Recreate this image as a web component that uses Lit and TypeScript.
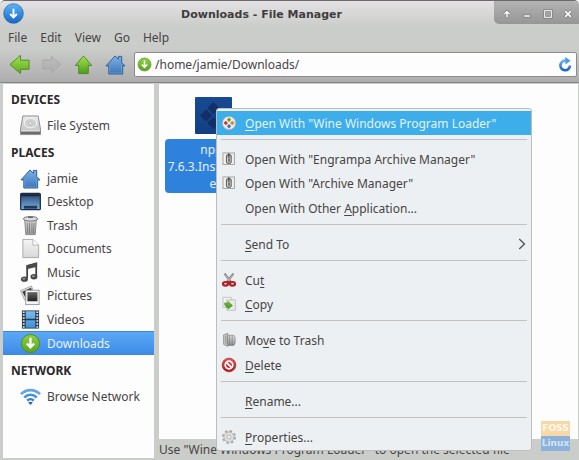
import { LitElement, html, css, svg, nothing, TemplateResult } from "lit";
import { customElement, property } from "lit/decorators.js";
import { classMap } from "lit/directives/class-map.js";

const house = svg`
  <path d="M1 12.500 10.500 2 14 5.500V2.500h3.500v6.500l3.500 3.500H18.500V21H4V12.500z" fill="url(#g)" stroke="#2c5c96" stroke-linejoin="round"/>
  <path d="M5 12v8h12.500v-8" fill="none" stroke="#8fb9e6" opacity=".5"/>`;

const downDisc = svg`
  <circle cx="11" cy="11" r="9.500" fill="url(#g)" stroke="#4f8f1c"/>
  <path d="M11 5v9M7.200 11 11 15l3.800-4" fill="none" stroke="#fff" stroke-width="2.400"/>`;

const archive = svg`
  <rect x="1.500" y="1.500" width="18" height="18" fill="#f1f1f0" stroke="#a0a0a0" stroke-width="1.500"/>
  <rect x="7" y="4" width="7.500" height="14" rx="3.500" fill="#cfcfcf" stroke="#666" stroke-width="1.700"/>
  <path d="M10.700 1.500V9M9 5h4M9 8h4" stroke="#555" stroke-width="1.500"/>
  <rect x="9.500" y="10" width="3" height="5.500" fill="#777"/>`;

interface Glyph { from?: string; to?: string; art: TemplateResult; }

const glyphs: Record<string, Glyph> = {
  app: { from: "#5bb4f6", to: "#1667c6", art: svg`
    <circle cx="11" cy="11" r="10.300" fill="url(#g)" stroke="#2460a0" stroke-width=".7"/>
    <path d="M11 6v9M7.500 11.500 11 15l3.500-3.500" fill="none" stroke="#fff" stroke-width="2"/>` },
  back: { from: "#a4e351", to: "#5aaa1e", art: svg`
    <path d="M1 11 12 1.500V6.500h9v9.500h-9v4.500z" fill="url(#g)" stroke="#4c8a22" stroke-linejoin="round"/>` },
  forward: { from: "#bebebe", to: "#adadad", art: svg`
    <path d="M20.500 11 11 2.500v4H2v9h9v4z" fill="url(#g)" stroke="#a6a6a6" stroke-linejoin="round"/>` },
  up: { from: "#a4e351", to: "#4c9c1a", art: svg`
    <path d="M11 2 19.500 12H16v8.500H6V12H2.500z" fill="url(#g)" stroke="#4c8a22" stroke-linejoin="round"/>` },
  home: { from: "#7fb2e6", to: "#3b75b8", art: house },
  downloads: { from: "#8fd044", to: "#5ba51f", art: downDisc },
  reload: { from: "#69b3f2", to: "#1d66c2", art: svg`
    <path d="M17.500 12.500A7 7 0 1 1 11.500 5.500" fill="none" stroke="url(#g)" stroke-width="4"/>
    <path d="M10.500 0 18.500 5.500 11 11z" fill="#4a9be6"/>` },
  disk: { from: "#ececec", to: "#b9b9b9", art: svg`
    <path d="M3 1h16l2.500 14V20.500H.5V15z" fill="url(#g)" stroke="#8a8a8a"/>
    <ellipse cx="11" cy="8.500" rx="6.500" ry="5" fill="#d0d0d0" stroke="#f7f7f7"/>
    <circle cx="11" cy="8.500" r="1.500" fill="#f6f6f6" stroke="#a2a2a2" stroke-width=".6"/>
    <path d="M1 17.500h20v2.500H1z" fill="#6c6c6c"/><path d="M2 16h18" stroke="#e2e2e2"/>` },
  desktop: { from: "#28446c", to: "#79b2ea", art: svg`
    <rect x=".7" y="2.500" width="20.600" height="17" rx="1" fill="url(#g)" stroke="#1c2c42" stroke-width="1.300"/>
    <path d="M1.500 4.500h19" stroke="#1a2737" stroke-width="2"/>
    <rect x="4" y="15.500" width="14" height="3" fill="#203957"/>` },
  trash: { from: "#dcdcdc", to: "#9a9a9a", art: svg`
    <path d="M5 5.500 6 20.500h10l1-15z" fill="url(#g)" stroke="#858585"/>
    <path d="M7.500 8l.7 11M10 8v11M12.500 8v11M14.800 8l-.7 11" stroke="#808080"/>
    <ellipse cx="11" cy="4" rx="7.500" ry="2.400" fill="#dcdcdc" stroke="#6c6c6c"/>
    <path d="M8.500 2.500h5" stroke="#666" stroke-width="1.500"/>` },
  page: { from: "#f5f5f5", to: "#d8d8d8", art: svg`
    <path d="M3 1.500h10.500L19.500 7.500v13H3z" fill="url(#g)" stroke="#a9a9a9"/>
    <path d="M13.500 1.500v6h6" fill="#fff" stroke="#b5b5b5"/>` },
  music: { art: svg`
    <path d="M7.500 17V4L17 1.500V15" fill="none" stroke="#3d3d3d" stroke-width="1.800"/>
    <path d="M7 3.500 18 1v4L7 7.500z" fill="#4a4a4a"/>
    <ellipse cx="4.600" cy="18" rx="3.600" ry="2.800" fill="#474747"/><ellipse cx="14.600" cy="15.500" rx="3.600" ry="2.800" fill="#474747"/>
    <ellipse cx="4" cy="17.500" rx="1.500" ry="1" fill="#999"/><ellipse cx="14" cy="15" rx="1.500" ry="1" fill="#999"/>` },
  pictures: { from: "#666", to: "#222", art: svg`
    <path d="M.5 6 12 1 16 11 5 16z" fill="#dedede" stroke="#8d8d8d" stroke-width=".7"/>
    <path d="M2.500 7 11.500 3 14 10 6 14z" fill="#3a3a3a"/>
    <rect x="6" y="5.500" width="14" height="15" fill="#f5f5f5" stroke="#999"/>
    <rect x="7.800" y="7.500" width="10.500" height="9.500" fill="url(#g)"/>` },
  videos: { from: "#78bdf2", to: "#3f8fd8", art: svg`
    <rect x="2" y="1.500" width="18" height="19" fill="#2c3a47"/>
    <path d="M6 2.300h10v8H6zM6 11.700h10v8H6z" fill="url(#g)"/>
    <path d="M3.900 2.500v18M18.100 2.500v18" stroke="#e9eef2" stroke-width="1.900" stroke-dasharray="1.600 1.500"/>` },
  wifi: { art: svg`
    <path d="M1 8.500C7 3 15 3 21 8.500" fill="none" stroke="#5fa7e6" stroke-width="2.800"/>
    <path d="M4.500 12C8.500 8.300 13.500 8.300 17.500 12" fill="none" stroke="#4690d8" stroke-width="2.700"/>
    <path d="M7.500 15.300c2-2 5-2 7 0" fill="none" stroke="#377dc9" stroke-width="2.500"/>
    <path d="M8.500 17.300c1.400-1.200 3.600-1.200 5 0L11 20z" fill="#2668b8"/>` },
  wine: { art: svg`
    <circle cx="11" cy="11" r="10.300" fill="#f0ece6" stroke="#c0b0a4"/>
    <path d="M11 2.500 14.300 6 11 9.500 7.700 6z" fill="#4ba52e"/><path d="M16 7.500 19.500 11 16 14.500 12.700 11z" fill="#d9842e"/>
    <path d="M6 7.500 9.300 11 6 14.500 2.500 11z" fill="#c23b36"/><path d="M11 12.500 14.300 16 11 19.500 7.700 16z" fill="#3b70b6"/>` },
  archive: { art: archive },
  cut: { art: svg`
    <path d="M4 1 14 14M18 1 8 14" stroke="#777" stroke-width="3.400"/>
    <path d="M4.500 2 13 13M17.500 2 9 13" stroke="#d8d8d8" stroke-width="1.200"/>
    <ellipse cx="5.500" cy="17" rx="4" ry="2.800" fill="none" stroke="#b51f25" stroke-width="3.400"/>
    <ellipse cx="16.500" cy="17" rx="4" ry="2.800" fill="none" stroke="#b51f25" stroke-width="3.400"/>
    <path d="M8 14h6" stroke="#b51f25" stroke-width="3"/>` },
  copy: { from: "#7cc742", to: "#3c8c1a", art: svg`
    <path d="M1.500 .500h13v16h-13z" fill="#f3f3f3" stroke="#a9a9a9"/>
    <path d="M7.500 4.500h13.500v16.500h-13.500z" fill="#e9e9e9" stroke="#a9a9a9"/>
    <path d="M4 9.500h5.500V7l7 6.500-7 5.500V16.500C6.500 16.500 4 14 4 9.500z" fill="url(#g)" stroke="#4a9426"/>` },
  bin: { from: "#e4e4e4", to: "#8a8a8a", art: svg`
    <path d="M2.500 3 9 .5v20.500L2.500 18z" fill="#c4c4c4" stroke="#777"/>
    <path d="M9 3.500h9.500c3 2 3 14 0 16H9z" fill="url(#g)" stroke="#777"/>
    <path d="M12 4v15M16 4v15M6 5v12" stroke="#858585" stroke-width="1.200"/>` },
  forbid: { from: "#e8534f", to: "#b0161a", art: svg`
    <circle cx="11" cy="11" r="10.800" fill="url(#g)" stroke="#94191c"/>
    <circle cx="11" cy="11" r="6" fill="none" stroke="#fff" stroke-width="2.600"/>
    <path d="M6.800 6.800 15.200 15.200" stroke="#fff" stroke-width="2.800"/>` },
  gear: { art: svg`
    <circle cx="11" cy="11" r="9.500" fill="none" stroke="#a6a6a6" stroke-width="3" stroke-dasharray="3.730 3.730"/>
    <circle cx="11" cy="11" r="8" fill="#dedede" stroke="#a0a0a0"/>
    <circle cx="11" cy="11" r="3" fill="#f3f3f3" stroke="#999"/>` },
  exe: { from: "#174a93", to: "#123f83", art: svg`
    <rect width="22" height="22" rx=".6" fill="url(#g)"/>
    <path d="M11 3 14.600 6.600 11 10.200 7.400 6.600zM6.600 7.400 10.200 11 6.600 14.600 3 11zM15.400 7.400 19 11 15.400 14.600 11.800 11zM11 11.800 14.600 15.400 11 19 7.400 15.400z" fill="#122f66"/>` },
  shade: { art: svg`<path d="M11 21V5M3.500 11 11 3.500 18.500 11" fill="none" stroke="#777" stroke-width="7"/><path d="M11 20V5M4 11 11 4l7 7" fill="none" stroke="#fff" stroke-width="4"/>` },
  minimize: { art: svg`<path d="M1 16.500h20" stroke="#777" stroke-width="8"/><path d="M3 16.500h16" stroke="#fff" stroke-width="4"/>` },
  maximize: { art: svg`<rect x="2" y="2" width="18" height="18" fill="none" stroke="#777" stroke-width="7"/><rect x="2" y="2" width="18" height="18" fill="none" stroke="#fff" stroke-width="3"/>` },
  close: { art: svg`<path d="M2 2 20 20M20 2 2 20" stroke="#777" stroke-width="8"/><path d="M3 3 19 19M19 3 3 19" stroke="#fff" stroke-width="4.600"/>` },
  chevron: { art: svg`<path d="M6 2 15.500 11 6 20" fill="none" stroke="#55504f" stroke-width="2.400"/>` },
};

@customElement("fm-icon")
class FmIcon extends LitElement {
  static styles = css`
    :host { display: block; flex: none; width: 22px; height: 22px; }
    .art { display: block; width: 100%; height: 100%; overflow: visible; }
  `;
  @property() name = "";

  render() {
    const glyph = glyphs[this.name];
    if (!glyph) return nothing;
    return html`<svg class="art" viewBox="0 0 22 22" aria-hidden="true">
      <defs><linearGradient id="g" x1="0" y1="0" x2="0" y2="1">
        <stop offset="0" stop-color=${glyph.from ?? "#fff"}></stop>
        <stop offset="1" stop-color=${glyph.to ?? "#fff"}></stop>
      </linearGradient></defs>
      ${glyph.art}
    </svg>`;
  }
}

interface Place { icon: string; label: string; selected?: boolean; }
interface Action { label: string; key: string; icon?: string; active?: boolean; submenu?: boolean; }

const sections: { title: string; places: Place[] }[] = [
  { title: "DEVICES", places: [{ icon: "disk", label: "File System" }] },
  { title: "PLACES", places: [
    { icon: "home", label: "jamie" },
    { icon: "desktop", label: "Desktop" },
    { icon: "trash", label: "Trash" },
    { icon: "page", label: "Documents" },
    { icon: "music", label: "Music" },
    { icon: "pictures", label: "Pictures" },
    { icon: "videos", label: "Videos" },
    { icon: "downloads", label: "Downloads", selected: true },
  ] },
  { title: "NETWORK", places: [{ icon: "wifi", label: "Browse Network" }] },
];

const actionGroups: Action[][] = [
  [{ label: 'Open With "Wine Windows Program Loader"', key: "O", icon: "wine", active: true }],
  [
    { label: 'Open With "Engrampa Archive Manager"', key: "", icon: "archive" },
    { label: 'Open With "Archive Manager"', key: "", icon: "archive" },
    { label: "Open With Other Application...", key: "A" },
  ],
  [{ label: "Send To", key: "S", submenu: true }],
  [{ label: "Cut", key: "t", icon: "cut" }, { label: "Copy", key: "C", icon: "copy" }],
  [{ label: "Move to Trash", key: "v", icon: "bin" }, { label: "Delete", key: "D", icon: "forbid" }],
  [{ label: "Rename...", key: "R" }],
  [{ label: "Properties...", key: "P", icon: "gear" }],
];

function mnemonic(label: string, key: string) {
  const at = key ? label.indexOf(key) : -1;
  if (at < 0) return html`${label}`;
  return html`${label.slice(0, at)}<span class="key">${key}</span>${label.slice(at + 1)}`;
}

@customElement("app-root")
class AppRoot extends LitElement {
  static styles = css`
    :host {
      display: block;
      font: 12px/18px "Noto Sans", sans-serif;
      color: #474445;
    }
    * { box-sizing: border-box; }
    button, input { font: inherit; color: inherit; border: 0; padding: 0; margin: 0; background: none; }
    ul { list-style: none; margin: 0; padding: 0; }

    .window {
      position: relative;
      display: flex;
      flex-direction: column;
      min-height: 100vh;
      background: #cbcdca;
      border-top: 1px solid #6c6a6c;
      border-radius: 5px 5px 0 0;
      overflow: hidden;
    }
    .titlebar {
      display: grid;
      grid-template-columns: 85px 1fr 85px;
      align-items: start;
      height: 26px;
      background: linear-gradient(#e3e1e3, #cbcdca);
    }
    .app-icon { width: 21px; height: 21px; margin: 2px 3px; }
    .title {
      margin: 0;
      padding: 5px 56px 0 0;
      font: bold 11px/18px "DejaVu Sans", sans-serif;
      text-align: center;
      white-space: nowrap;
      color: #3f3d40;
    }
    .controls {
      display: flex;
      align-items: center;
      justify-content: space-around;
      height: 23px;
      padding: 2px 1px 0 3px;
      background: linear-gradient(#b3b3b3, #969696);
      border-bottom-left-radius: 5px;
    }
    .controls fm-icon { width: 8px; height: 8px; }
    .menubar { display: flex; gap: 13px; height: 21px; padding: 0 8px; }
    .toolbar {
      display: flex;
      align-items: center;
      height: 35px;
      padding: 0 2px 2px 3px;
      background: linear-gradient(#cbcdca, #adadad);
      border-bottom: 1px solid #858585;
    }
    .nav { display: grid; place-items: center; flex: none; width: 32px; height: 30px; }
    .nav fm-icon { width: 21px; height: 21px; }
    .location {
      display: flex;
      align-items: center;
      flex: 1;
      gap: 3px;
      min-width: 0;
      height: 25px;
      margin-left: 3px;
      padding: 0 3px 0 2px;
      background: #fdfdfd;
      border: 1px solid #8f8b8b;
      border-radius: 2px;
    }
    .location fm-icon { width: 15px; height: 15px; }
    .path { flex: 1; min-width: 0; height: 22px; padding-top: 1px; outline: 0; }

    .body { display: flex; flex: 1; gap: 5px; padding: 1px 1px 1px 3px; }
    .sidebar {
      flex: none;
      width: 151px;
      padding-top: 4px;
      background: #fdfdfd;
      margin-bottom: 1px;
    }
    .section { margin-bottom: 4px; }
    .heading { margin: 0 0 2px; padding-left: 8px; font: bold 12px/24px "Noto Sans", sans-serif; color: #2b292a; }
    .places { display: flex; flex-direction: column; justify-content: space-between; }
    .places.long { min-height: 188px; }
    .place {
      display: flex;
      align-items: center;
      gap: 6px;
      width: 100%;
      height: 23px;
      padding-left: 17px;
      text-align: left;
      white-space: nowrap;
    }
    .place fm-icon { width: 21px; height: 21px; }
    .place.selected { height: 24px; color: #eaf3fd; background: linear-gradient(#5ca8f6, #3b8ae6); border-top: 1px solid #3f86d6; }
    .label { padding-top: 1px; }

    .main { display: flex; flex-direction: column; flex: 1; min-width: 0; }
    .files { flex: 1; padding: 13px 6px; background: #fdfdfd; }
    .file { display: flex; flex-direction: column; align-items: center; gap: 5px; width: 96px; }
    .file fm-icon { width: 37px; height: 37px; }
    .file-name {
      width: 100%;
      padding: 2px 0 1px;
      line-height: 17px;
      text-align: center;
      white-space: nowrap;
      color: #e6f0fb;
      background: #2f82dc;
      border-radius: 4px;
    }
    .status { height: 20px; padding-top: 2px; white-space: nowrap; }

    .context {
      position: absolute;
      top: 107px;
      left: 216px;
      display: flex;
      flex-direction: column;
      justify-content: space-between;
      width: 316px;
      min-height: 343px;
      padding: 2px 0 1px;
      background: #ecf0f2;
      border: 1px solid #bdbdbd;
      border-radius: 3px;
    }
    .action {
      display: grid;
      grid-template-columns: 14px 1fr 12px;
      align-items: center;
      gap: 9px;
      width: 100%;
      height: 24px;
      padding: 0 3px 0 5px;
      text-align: left;
      white-space: nowrap;
    }
    .action fm-icon { width: 14px; height: 14px; }
    .action .chevron { width: 12px; height: 12px; }
    .action .label { padding-top: 2px; }
    .action.active { color: #e4f3fc; background: #3daee9; }
    .key { text-decoration: underline; text-underline-offset: 2px; }
    .rule { width: auto; height: 1px; margin: 4px 4px 7px; border: 0; background: #c5c2c2; }

    .badge {
      position: absolute;
      right: 9px;
      bottom: 9px;
      width: 29px;
      font: bold 9px/15px "DejaVu Sans", sans-serif;
      text-align: center;
    }
    .badge-top { color: #fffaf0; background: #f8d8a6; }
    .badge-bottom { color: #d5e4f3; background: #8cb2dc; }
  `;

  private section(title: string, places: Place[]) {
    return html`<section class="section">
      <h2 class="heading">${title}</h2>
      <ul class=${classMap({ places: true, long: places.length > 1 })}>
        ${places.map((p) => html`<li>
          <button class=${classMap({ place: true, selected: !!p.selected })}><fm-icon name=${p.icon}></fm-icon><span class="label">${p.label}</span></button>
        </li>`)}
      </ul>
    </section>`;
  }

  private action(a: Action) {
    return html`<button role="menuitem" class=${classMap({ action: true, active: !!a.active })}>
      <fm-icon name=${a.icon ?? ""}></fm-icon>
      <span class="label">${mnemonic(a.label, a.key)}</span>
      ${a.submenu ? html`<fm-icon class="chevron" name="chevron"></fm-icon>` : nothing}
    </button>`;
  }

  render() {
    return html`<div class="window">
      <header class="titlebar">
        <fm-icon class="app-icon" name="app"></fm-icon>
        <h1 class="title">Downloads - File Manager</h1>
        <div class="controls">
          ${["shade", "minimize", "maximize", "close"].map((n) => html`<button aria-label=${n}><fm-icon name=${n}></fm-icon></button>`)}
        </div>
      </header>
      <nav class="menubar">${["File", "Edit", "View", "Go", "Help"].map((m) => html`<button>${m}</button>`)}</nav>
      <div class="toolbar">
        ${["back", "forward", "up", "home"].map((n) => html`<button class="nav" aria-label=${n}><fm-icon name=${n}></fm-icon></button>`)}
        <div class="location">
          <fm-icon name="downloads"></fm-icon>
          <input class="path" aria-label="Location" .value=${"/home/jamie/Downloads/"} />
          <button aria-label="Reload"><fm-icon name="reload"></fm-icon></button>
        </div>
      </div>
      <div class="body">
        <aside class="sidebar">${sections.map((s) => this.section(s.title, s.places))}</aside>
        <main class="main">
          <div class="files">
            <div class="file">
              <fm-icon name="exe"></fm-icon>
              <div class="file-name">npp.<br />7.6.3.Installer.ex<br />e</div>
            </div>
          </div>
          <footer class="status">Use "Wine Windows Program Loader" to open the selected file</footer>
        </main>
      </div>
      <div class="context" role="menu">
        ${actionGroups.map((group, i) => html`${i ? html`<hr class="rule" />` : nothing}${group.map((a) => this.action(a))}`)}
      </div>
      <div class="badge"><div class="badge-top">FOSS</div><div class="badge-bottom">Linux</div></div>
    </div>`;
  }
}
